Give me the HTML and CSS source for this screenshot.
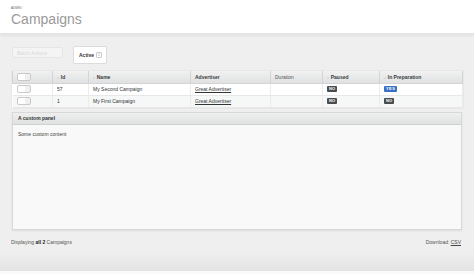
FILE: index.html
```html
<!DOCTYPE html>
<html lang="en">
<head>
  <meta charset="UTF-8" />
  <meta name="viewport" content="width=device-width, initial-scale=1.0" />
  <title>Campaigns | Admin</title>
  <link rel="stylesheet" href="styles.css">
</head>
<body>
  <!-- Title bar -->
  <div class="title-bar">
    <div class="breadcrumb">ADMIN /</div>
    <h2 class="page-title">Campaigns</h2>
  </div>

  <div class="main">
    <!-- Actions and scopes -->
    <div class="table-tools">
      <button class="batch-btn" disabled>Batch Actions</button>
      <div class="scope">Active <span class="count">2</span></div>
    </div>

    <table class="index-table">
      <colgroup>
        <col class="c-cb" /><col class="c-id" /><col class="c-name" /><col class="c-adv" />
        <col class="c-dur" /><col class="c-paused" /><col class="c-prep" />
      </colgroup>
      <thead>
        <tr>
          <th><span class="toggle-box"></span></th>
          <th class="sortable">Id</th>
          <th class="sortable">Name</th>
          <th>Advertiser</th>
          <th class="plain">Duration</th>
          <th class="sortable">Paused</th>
          <th class="sortable">In Preparation</th>
        </tr>
      </thead>
      <tbody>
        <tr>
          <td><span class="toggle-box"></span></td>
          <td>57</td>
          <td>My Second Campaign</td>
          <td><a href="#">Great Advertiser</a></td>
          <td></td>
          <td><span class="tag no">NO</span></td>
          <td><span class="tag yes">YES</span></td>
        </tr>
        <tr class="even">
          <td><span class="toggle-box"></span></td>
          <td>1</td>
          <td>My First Campaign</td>
          <td><a href="#">Great Advertiser</a></td>
          <td></td>
          <td><span class="tag no">NO</span></td>
          <td><span class="tag no">NO</span></td>
        </tr>
      </tbody>
    </table>

    <!-- Custom panel -->
    <div class="panel">
      <h3>A custom panel</h3>
      <div class="panel-body">Some custom content</div>
    </div>

    <div class="footer-row">
      <div>Displaying <b>all 2</b> Campaigns</div>
      <div>Download: <a href="#">CSV</a></div>
    </div>
  </div>

  <div class="bottom-shade"></div>
</body>
</html>
```

FILE: styles.css
```css
* {
  box-sizing: border-box;
  font-family: "Liberation Sans", Arial, sans-serif;
}

body {
  margin: 0;
  padding: 0;
  background: #efefef;
  color: #323537;
  height: 274px;
  overflow: hidden;
  display: flex;
  flex-direction: column;
}

.title-bar {
  background: #fff;
  height: 34px;
  padding: 6px 11px 0;
  box-shadow: 0 2px 3px rgba(0, 0, 0, 0.06);
  border-bottom: 1px solid #e4e4e4;
}

.breadcrumb {
  font-size: 3px;
  color: #666;
  line-height: 4px;
}

.page-title {
  margin: 1px 0 0;
  font-size: 14px;
  font-weight: normal;
  color: #9a9a9a;
  line-height: 17px;
}

.main {
  padding: 0 12px;
  flex: 1;
}

.table-tools {
  display: flex;
  align-items: flex-start;
  gap: 10px;
  margin-top: 12px;
  height: 25px;
}

.batch-btn {
  width: 51px;
  height: 11px;
  margin-top: 1px;
  padding: 0 0 0 4px;
  font-size: 5px;
  color: #d8d8d8;
  background: #f4f4f4;
  border: 1px solid #e6e6e6;
  border-radius: 2px;
  text-align: left;
}

.scope {
  width: 34px;
  height: 18px;
  background: #fff;
  border: 1px solid #dcdcdc;
  border-radius: 2px;
  font-size: 5px;
  font-weight: bold;
  color: #333;
  display: flex;
  align-items: center;
  padding-left: 5px;
  gap: 2px;
}

.scope .count {
  font-size: 3.5px;
  font-weight: normal;
  color: #aaa;
  border: 1px solid #ccc;
  border-radius: 1px;
  padding: 0 1px;
  line-height: 4px;
}

.index-table {
  width: 450px;
  border-collapse: collapse;
  table-layout: fixed;
  font-size: 5px;
  background: #fff;
  box-shadow: 0 0 1px rgba(0, 0, 0, 0.2);
}

.c-cb { width: 40px; }
.c-id { width: 36px; }
.c-name { width: 102px; }
.c-adv { width: 80px; }
.c-dur { width: 52px; }
.c-paused { width: 57px; }
.c-prep { width: 83px; }

.index-table th {
  height: 12px;
  padding: 0 0 0 4px;
  text-align: left;
  font-weight: bold;
  color: #3a3d40;
  background: linear-gradient(#f1f1f1, #dfe1e2);
  border: 1px solid #d4d4d4;
  border-top: none;
}

.index-table th.plain {
  font-weight: normal;
  color: #555;
}

.index-table th.sortable::before {
  content: "\2195";
  font-weight: normal;
  color: #aaa;
  font-size: 3.5px;
  margin-right: 2px;
}

.index-table td {
  height: 12px;
  padding: 0 0 0 4px;
  color: #323537;
  border-right: 1px solid #ececec;
  border-bottom: 1px solid #e8e8e8;
}

.index-table tr.even td {
  background: #f6f7f7;
}

.index-table a {
  color: #323537;
  text-decoration: underline;
}

.toggle-box {
  display: inline-block;
  width: 14px;
  height: 8px;
  vertical-align: middle;
  border: 1px solid #c9c9c9;
  border-radius: 2px;
  background: linear-gradient(90deg, #fff 0, #fff 55%, #f0f0f0 55%, #f0f0f0 100%);
}

.tag {
  display: inline-block;
  font-size: 4px;
  font-weight: bold;
  color: #fff;
  line-height: 6px;
  padding: 0 2px;
  border-radius: 1px;
  vertical-align: middle;
}

.tag.no {
  background: #484c50;
}

.tag.yes {
  background: #3b6fc5;
  letter-spacing: 0.4px;
}

.panel {
  width: 450px;
  height: 118px;
  margin-top: 4px;
  background: #f9f9f9;
  border: 1px solid #d8d8d8;
  box-shadow: 0 1px 2px rgba(0, 0, 0, 0.08);
}

.panel h3 {
  margin: 0;
  height: 12px;
  line-height: 11px;
  padding-left: 5px;
  font-size: 5px;
  font-weight: bold;
  color: #323537;
  background: linear-gradient(#efefef, #dfe1e2);
  border-bottom: 1px solid #d0d0d0;
}

.panel-body {
  padding: 6px 5px;
  font-size: 5px;
  color: #444;
}

.footer-row {
  width: 450px;
  margin: 9px 0 0 -1px;
  display: flex;
  justify-content: space-between;
  font-size: 5px;
  color: #555;
}

.footer-row b {
  color: #222;
}

.footer-row a {
  color: #444;
  text-decoration: underline;
}

.bottom-shade {
  height: 22px;
  background: linear-gradient(#efefef, #e4e4e4 85%, #fafafa 86%);
}
```
